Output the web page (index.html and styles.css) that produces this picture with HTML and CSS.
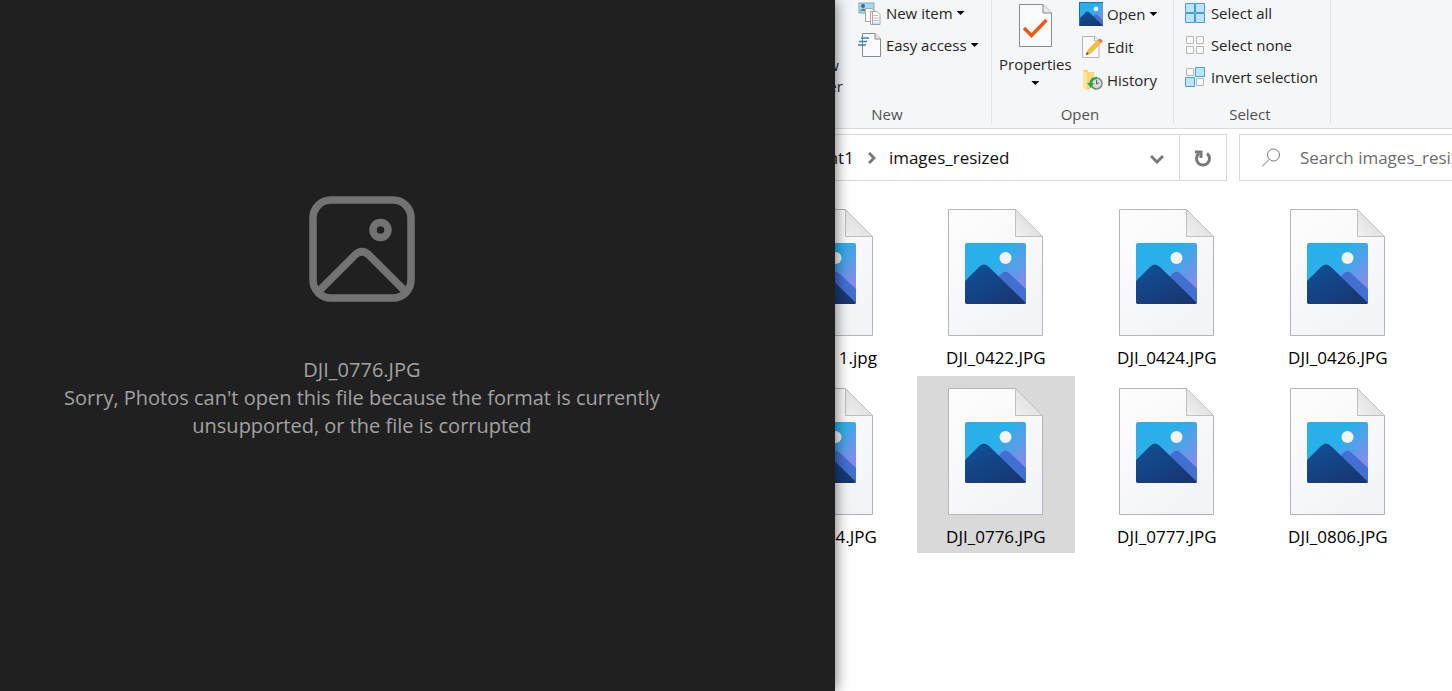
FILE: index.html
```html
<!doctype html>
<html lang="en">
  <head>
    <meta charset="UTF-8" />
    <meta name="viewport" content="width=device-width, initial-scale=1.0" />
    <title>images_resized</title>
    <link rel="stylesheet" href="styles.css">
  </head>
  <body>
    <svg class="sprite" aria-hidden="true">
      <defs>
        <linearGradient id="sky" x1="0.2" y1="0.1" x2="1" y2="0.8">
          <stop offset="0.35" stop-color="#29b0ea" />
          <stop offset="1" stop-color="#9a84e6" />
        </linearGradient>
        <linearGradient id="hill" x1="0" y1="0" x2="0.8" y2="1">
          <stop offset="0" stop-color="#10529a" />
          <stop offset="1" stop-color="#18366f" />
        </linearGradient>
        <linearGradient id="paper" x1="0" y1="0" x2="0.6" y2="1">
          <stop offset="0" stop-color="#fdfdfd" />
          <stop offset="1" stop-color="#f3f4f7" />
        </linearGradient>
        <linearGradient id="fold" x1="0" y1="1" x2="0.7" y2="0.3">
          <stop offset="0" stop-color="#f1f1f1" />
          <stop offset="1" stop-color="#dcdcdc" />
        </linearGradient>
        <clipPath id="tile"><rect width="61" height="61" rx="2" /></clipPath>
      </defs>
      <symbol id="picture" viewBox="0 0 61 61">
        <g clip-path="url(#tile)">
          <rect width="61" height="61" fill="url(#sky)" />
          <path d="M24 45 36 31Q40.500 26 45 31L61 46V61H30Z" fill="#426fd0" />
          <path d="M0 38 14 24Q19 19 24 24L61 60V61H0Z" fill="url(#hill)" />
          <circle cx="40.500" cy="15" r="6" fill="#f2f3f5" />
        </g>
      </symbol>
      <symbol id="image-file" viewBox="0 0 95 127">
        <path d="M.5.5H67.500L94.500 27.500V126.500H.5Z" fill="url(#paper)" stroke="#b3b5b8" />
        <path d="M67.500.5V27.500H94.500Z" fill="url(#fold)" stroke="#bfc0c2" />
        <use href="#picture" x="17" y="34" width="61" height="61" />
      </symbol>
    </svg>

    <main class="viewer">
      <div class="message">
        <svg class="broken" viewBox="0 0 106 106" fill="none" stroke="#737373" stroke-width="7.500">
          <rect x="4" y="4" width="98" height="98" rx="18" />
          <circle cx="71.500" cy="34" r="7.500" />
          <path d="M9 96 46 59Q53 52.500 60 59L97 96" />
        </svg>
        <p>DJI_0776.JPG</p>
        <p>Sorry, Photos can't open this file because the format is currently unsupported, or the file is corrupted</p>
      </div>
    </main>

    <section class="explorer">
      <div class="ribbon">
        <div class="group group-new">
          <div class="group-body">
            <button class="new-folder" type="button"><span>w</span><span>er</span></button>
            <div class="commands">
              <button type="button">
                <svg viewBox="0 0 24 24">
                  <rect x="1" y="2" width="15" height="10" fill="#a9d9f2" stroke="#7faabd" />
                  <path d="M2 10Q5 5 9 10" fill="#4b9a65" />
                  <circle cx="5" cy="5" r="2" fill="#326e9c" />
                  <path d="M7.500 7.500H14L17 10.500V20.500H7.500Z" fill="#fff" stroke="#a5a5a5" />
                  <path d="M12.500 10.500H19L22 13.500V23.500H12.500Z" fill="#fff" stroke="#a5a5a5" />
                  <path d="M14 14.500H20M14 17H21M14 19.500H21M14 22H21" stroke="#9cc6ed" />
                  <path d="M14.500 11V23" stroke="#ef8c80" />
                </svg>
                <span>New item</span><i class="caret"></i>
              </button>
              <button type="button">
                <svg viewBox="0 0 24 24">
                  <path d="M4.500.5H17L22.500 6V23.500H4.500Z" fill="#fafafa" stroke="#8a8a8a" />
                  <path d="M17 .5V6H22.500" fill="#e4e4e4" stroke="#8a8a8a" />
                  <path d="M3 5H11M1 8.500H9M0 12H8" stroke="#3b83be" stroke-width="1.500" />
                </svg>
                <span>Easy access</span><i class="caret"></i>
              </button>
            </div>
          </div>
          <div class="group-name">New</div>
        </div>

        <div class="group group-open">
          <div class="group-body">
            <button class="properties" type="button">
              <svg viewBox="0 0 33 43">
                <path d="M.5.5H24L32.500 9V42.500H.5Z" fill="#f9fafb" stroke="#8b8b8b" />
                <path d="M24 .5V9H32.500" fill="#e9e9e9" stroke="#8b8b8b" />
                <path d="M5 24 12.500 31.500 27.500 16" fill="none" stroke="#f25a13" stroke-width="3.500" />
              </svg>
              <span>Properties</span>
              <i class="caret"></i>
            </button>
            <div class="commands">
              <button type="button">
                <svg viewBox="0 0 24 24">
                  <rect width="24" height="24" fill="#0875d1" />
                  <svg x="1" y="1" width="22" height="22" viewBox="0 0 61 61"><use href="#picture" /></svg>
                </svg>
                <span>Open</span><i class="caret"></i>
              </button>
              <button type="button">
                <svg viewBox="0 0 24 24">
                  <path d="M3.500 1.500H16L20 5.500V22.500H3.500Z" fill="#f9f9f9" stroke="#b3b3b3" />
                  <path d="M15.500 1.500V6H20" fill="none" stroke="#b3b3b3" />
                  <path d="M7 20 9 15 19 5 22 8 12 18Z" fill="#f6be32" stroke="#dba12b" stroke-width=".5" />
                  <path d="M19 5 21 3.500 24 6 22 8Z" fill="#df6e72" />
                  <path d="M7 20 8 17 10 19Z" fill="#54483b" />
                </svg>
                <span>Edit</span>
              </button>
              <button type="button">
                <svg viewBox="0 0 24 24">
                  <path d="M4 2H8L9 4H15V18L8 22 4 20Z" fill="#f1c75e" />
                  <path d="M4 2 8 5V22L4 20Z" fill="#ffe49a" />
                  <path d="M8 4H15V18L8 21Z" fill="#fbd775" />
                  <circle cx="17.500" cy="15.500" r="5.500" fill="#d8dadc" stroke="#85898b" stroke-width="1.500" />
                  <path d="M17.500 12V16L20 14.500" fill="none" stroke="#666" />
                  <path d="M18 10Q12 10 11.500 16" fill="none" stroke="#2ba64d" stroke-width="2.500" />
                  <path d="M8 15H15L12 20Z" fill="#2ba64d" />
                  <path d="M12 18Q14 21 17 21" fill="none" stroke="#2ba64d" />
                </svg>
                <span>History</span>
              </button>
            </div>
          </div>
          <div class="group-name">Open</div>
        </div>

        <div class="group group-select">
          <div class="group-body">
            <div class="commands">
              <button type="button">
                <svg viewBox="0 0 20 20" fill="#bde3ff" stroke="#419ee0">
                  <path d="M.5.5H9.500V9.500H.5ZM10.500.5H19.500V9.500H10.500ZM.5 10.500H9.500V19.500H.5ZM10.500 10.500H19.500V19.500H10.500Z" />
                </svg>
                <span>Select all</span>
              </button>
              <button type="button">
                <svg viewBox="0 0 20 20" fill="#f8f8f8" stroke="#b7b7b7">
                  <path d="M1.500 1.500H8.500V8.500H1.500ZM11.500 1.500H18.500V8.500H11.500ZM1.500 11.500H8.500V18.500H1.500ZM11.500 11.500H18.500V18.500H11.500Z" />
                </svg>
                <span>Select none</span>
              </button>
              <button type="button">
                <svg viewBox="0 0 20 20" fill="#f8f8f8" stroke="#b7b7b7">
                  <path d="M1.500 1.500H8.500V8.500H1.500ZM11.500 11.500H18.500V18.500H11.500Z" />
                  <path d="M10.500.5H19.500V9.500H10.500ZM.5 10.500H9.500V19.500H.5Z" fill="#bde3ff" stroke="#419ee0" />
                </svg>
                <span>Invert selection</span>
              </button>
            </div>
          </div>
          <div class="group-name">Select</div>
        </div>
      </div>

      <div class="navigation">
        <div class="address">
          <a class="parent" href="#"><span>nt1</span></a>
          <svg class="crumb-arrow" viewBox="0 0 8 12"><path d="M1 1 6 6 1 11" /></svg>
          <a href="#">images_resized</a>
          <button class="dropdown" type="button" aria-label="Previous locations">
            <svg viewBox="0 0 14 10"><path d="M1 2 7 8 13 2" /></svg>
          </button>
          <button class="refresh" type="button" aria-label="Refresh">
            <svg viewBox="0 0 18 18">
              <path d="M5 3.500A6.500 6.500 0 1 0 13 3.500" />
              <path d="M1 2H7V8" />
            </svg>
          </button>
        </div>
        <div class="search">
          <svg viewBox="0 0 20 20"><circle cx="12.500" cy="7" r="6" /><path d="M8 11.500 1 18.500" /></svg>
          <input type="text" placeholder="Search images_resized" aria-label="Search images_resized" />
        </div>
      </div>

      <div class="files">
        <div class="file edge"><svg><use href="#image-file" /></svg><span>1.jpg</span></div>
        <div class="file"><svg><use href="#image-file" /></svg><span>DJI_0422.JPG</span></div>
        <div class="file"><svg><use href="#image-file" /></svg><span>DJI_0424.JPG</span></div>
        <div class="file"><svg><use href="#image-file" /></svg><span>DJI_0426.JPG</span></div>
        <div class="file edge"><svg><use href="#image-file" /></svg><span>4.JPG</span></div>
        <div class="file selected"><svg><use href="#image-file" /></svg><span>DJI_0776.JPG</span></div>
        <div class="file"><svg><use href="#image-file" /></svg><span>DJI_0777.JPG</span></div>
        <div class="file"><svg><use href="#image-file" /></svg><span>DJI_0806.JPG</span></div>
      </div>
    </section>
  </body>
</html>
```
FILE: styles.css
```css
* {
  box-sizing: border-box;
}
body {
  display: flex;
  min-height: 100vh;
  margin: 0;
  overflow: hidden;
  background: #fff;
  font-family: "Segoe UI", "Open Sans", sans-serif;
  font-size: 15px;
  color: #262626;
}
svg {
  flex: none;
}
button {
  padding: 0;
  border: none;
  background: none;
  font: inherit;
  color: inherit;
}
a {
  color: inherit;
  text-decoration: none;
}
.sprite {
  position: absolute;
  width: 0;
  height: 0;
}

/* photo viewer */
.viewer {
  flex: none;
  z-index: 1;
  width: 57.5%;
  padding: 196px 111px 0 0;
  background: #202020;
  box-shadow: 0 0 14px rgba(0, 0, 0, 0.6);
}
.message {
  max-width: 620px;
  margin: 0 auto;
  font-size: 20px;
  line-height: 28px;
  text-align: center;
  color: #a2a2a2;
}
.message p {
  margin: 0;
}
.broken {
  display: block;
  width: 106px;
  height: 106px;
  margin: 0 auto 54px;
}

/* file explorer */
.explorer {
  flex: 1;
  min-width: 0;
  overflow: hidden;
}
.ribbon {
  display: flex;
  height: 129px;
  padding-bottom: 4px;
  background: #f5f6f8;
  border-bottom: 1px solid #dadbdc;
}
.group {
  display: flex;
  flex-direction: column;
  flex: none;
  border-right: 1px solid #e2e3e4;
}
.group-new {
  width: 157px;
}
.group-open {
  width: 182px;
}
.group-select {
  width: 157px;
}
.group-body {
  display: flex;
  flex: 1;
}
.group-name {
  height: 20px;
  line-height: 20px;
  text-align: center;
  color: #505050;
}
.group-new .group-name {
  padding-right: 52px;
}
.group-open .group-name {
  padding-right: 5px;
}
.group-select .group-name {
  padding-right: 4px;
}
.commands {
  display: flex;
  flex-direction: column;
  align-items: flex-start;
  gap: 6px;
}
.commands button {
  display: flex;
  align-items: center;
  gap: 4px;
  height: 26px;
  white-space: nowrap;
}
.commands svg {
  width: 24px;
  height: 24px;
}
.group-new .commands {
  margin-left: 15px;
}
.group-open .commands {
  gap: 7px;
  padding-top: 1px;
}
.group-select .commands {
  margin-left: 11px;
}
.group-select .commands button {
  gap: 6px;
}
.group-select svg {
  width: 20px;
  height: 20px;
}
.caret {
  flex: none;
  width: 8px;
  height: 4px;
  background: #000;
  clip-path: polygon(0 0, 100% 0, 50% 100%);
}
.new-folder {
  display: flex;
  flex-direction: column;
  align-items: flex-end;
  width: 8px;
  padding-top: 55px;
  overflow: hidden;
  line-height: 21px;
}
.new-folder span:first-child {
  padding-right: 4px;
}
.properties {
  display: flex;
  flex-direction: column;
  align-items: center;
  width: 87px;
  padding-top: 4px;
  line-height: 34px;
}
.properties svg {
  width: 33px;
  height: 43px;
}

/* address and search */
.navigation {
  display: flex;
  gap: 12px;
  padding-top: 5px;
  font-size: 17px;
}
.address,
.search {
  display: flex;
  align-items: center;
  flex: none;
  height: 47px;
  border: 1px solid #d9d9d9;
}
.address {
  width: 392px;
  border-left: none;
  color: #111;
}
.address svg {
  fill: none;
  stroke: #7a7a7a;
  stroke-width: 3;
}
.parent {
  display: flex;
  justify-content: flex-end;
  width: 19px;
  overflow: hidden;
}
.crumb-arrow {
  width: 8px;
  height: 12px;
  margin: 0 13px 0 14px;
}
.dropdown {
  margin-left: auto;
  width: 44px;
  height: 100%;
}
.dropdown svg {
  width: 14px;
  height: 10px;
}
.refresh {
  width: 47px;
  height: 100%;
  border-left: 1px solid #d9d9d9;
}
.refresh svg {
  width: 18px;
  height: 18px;
  vertical-align: middle;
}
.search {
  width: 300px;
  padding-left: 21px;
}
.search svg {
  width: 20px;
  height: 20px;
  fill: none;
  stroke: #777;
}
.search input {
  flex: 1;
  min-width: 0;
  padding: 0 0 0 19px;
  border: none;
  background: none;
  font: inherit;
}
.search input::placeholder {
  color: #6d6d6d;
}

/* thumbnails */
.files {
  display: grid;
  grid-template-columns: 69px repeat(3, 158px);
  gap: 2px 13px;
  padding-top: 16px;
}
.file {
  display: flex;
  flex-direction: column;
  align-items: center;
  height: 177px;
  padding-top: 12px;
  font-size: 17px;
  line-height: 24px;
  color: #000;
}
.file svg {
  width: 95px;
  height: 127px;
  margin-bottom: 10px;
}
.edge {
  align-items: flex-end;
  padding-right: 31px;
}
.edge span {
  margin-right: -4px;
}
.selected {
  background: #d9d9d9;
}
```
